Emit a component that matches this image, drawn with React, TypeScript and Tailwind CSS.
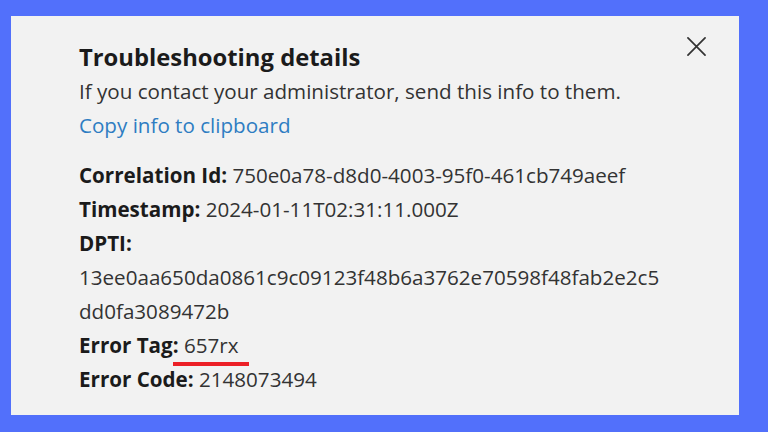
import React from "react"

const ROWS = [
  { label: "Correlation Id:", value: "750e0a78-d8d0-4003-95f0-461cb749aeef" },
  { label: "Timestamp:", value: "2024-01-11T02:31:11.000Z" },
]

export default function App() {
  return (
    <div
      className="h-[432px] w-[768px] overflow-hidden bg-[#5270fb] pl-[11px] pt-[16px]"
      style={{ fontFamily: '"Open Sans", "Noto Sans", sans-serif' }}
    >
      <div className="relative h-[399px] w-[728px] bg-[#f2f2f2] pl-[68px] pt-[24px] text-[20.6px] leading-[34px] text-[#333]">
        {/* Close */}
        <button className="absolute right-[33px] top-[21px] flex h-[19px] w-[19px] items-center justify-center text-[#333]">
          <svg viewBox="0 0 20 20" className="h-[19px] w-[19px]" fill="none" stroke="currentColor" strokeWidth={1.8} strokeLinecap="round">
            <path d="M1 1L19 19M19 1L1 19" />
          </svg>
        </button>

        <h1 className="text-[23.8px] font-bold text-[#1b1b1b]">Troubleshooting details</h1>
        <p>If you contact your administrator, send this info to them.</p>
        <a className="block text-[#2e7dc2]">Copy info to clipboard</a>

        <div className="mt-[16px]">
          {ROWS.map((r) => (
            <p key={r.label}>
              <span className="font-bold text-[#1b1b1b]">{r.label}</span> {r.value}
            </p>
          ))}
          <p className="font-bold text-[#1b1b1b]">DPTI:</p>
          <p>13ee0aa650da0861c9c09123f48b6a3762e70598f48fab2e2c5</p>
          <p>dd0fa3089472b</p>
          <p>
            <span className="font-bold text-[#1b1b1b]">Error Tag:</span>{" "}
            <span className="relative">
              657rx
              <span className="absolute bottom-[-7px] left-[-11px] right-[-11px] h-[4px] bg-[#ec2027]" />
            </span>
          </p>
          <p>
            <span className="font-bold text-[#1b1b1b]">Error Code:</span> 2148073494
          </p>
        </div>
      </div>
    </div>
  )
}
